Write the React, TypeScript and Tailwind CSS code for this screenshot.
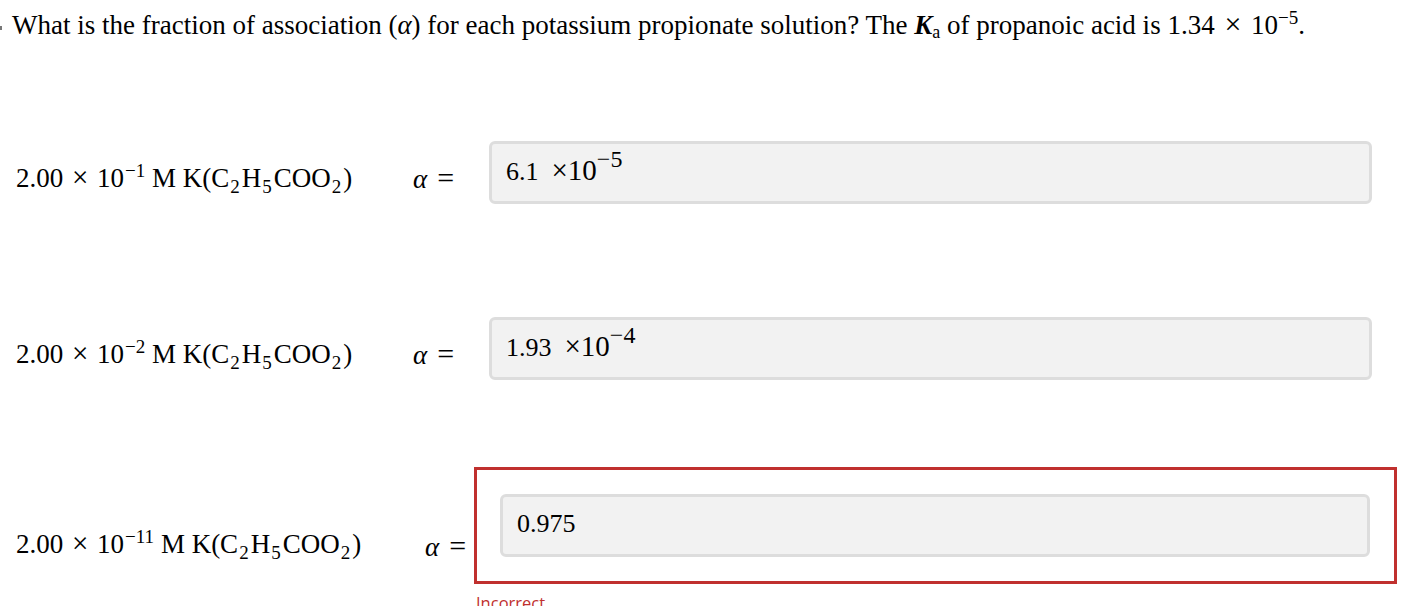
import React from "react";

const serif = { fontFamily: '"Liberation Serif", "Times New Roman", serif' };

function Sub({ c }: { c: string }) {
  return <sub className="text-[19px] relative top-[6px] mr-[2px] ml-[1px]">{c}</sub>;
}

function Label({ exp }: { exp: string }) {
  return (
    <span className="text-[27px] leading-[31px] text-black whitespace-nowrap" style={serif}>
      2.00 <span className="text-[29px] leading-none mx-[2px]">×</span> 10<sup className="text-[19px] relative -top-[10px] ml-[1px]">−{exp}</sup> M K(C<Sub c="2" />H<Sub c="5" />COO<Sub c="2" />)
    </span>
  );
}

function Alpha() {
  return (
    <span className="text-[27px] leading-[31px] text-black whitespace-nowrap" style={serif}>
      <i>α</i><span className="ml-[10px] text-[30px] leading-none">=</span>
    </span>
  );
}

function Box({ children }: { children?: React.ReactNode }) {
  return (
    <div className="h-[63px] w-full rounded-[6px] border-[3px] border-[#dddddd] bg-[#f2f2f2] pl-[14px] pt-[12px] text-[26px] leading-[30px] text-black" style={serif}>
      {children}
    </div>
  );
}

function Sci({ m, e }: { m: string; e: string }) {
  return (
    <span className="whitespace-nowrap">
      {m}&nbsp;&nbsp;<span className="text-[29px] leading-none">×10</span><sup className="text-[24px] relative -top-[13px]">−{e}</sup>
    </span>
  );
}

export default function App() {
  return (
    <div className="w-[1410px] h-[606px] bg-white overflow-hidden relative">
      <div className="flex items-center h-[50px]">
        <span className="w-[2px] h-[4px] bg-[#777] mt-[6px] mr-[10px]" />
        <span className="text-[27px] leading-[31px] text-black whitespace-nowrap" style={serif}>
          What is the fraction of association (<i>α</i>) for each potassium propionate solution? The <b><i>K</i></b><sub className="text-[18px] relative top-[4px]">a</sub> of propanoic acid is 1.34 <span className="text-[30px] leading-none mx-[3px]">×</span> 10<sup className="text-[19px] relative -top-[10px]">−5</sup>.
        </span>
      </div>

      <div className="flex items-start mt-[91px]">
        <div className="w-[413px] pl-[16px] pt-[22px]"><Label exp="1" /></div>
        <div className="w-[76px] pt-[22px]"><Alpha /></div>
        <div className="w-[883px]"><Box><Sci m="6.1" e="5" /></Box></div>
      </div>

      <div className="flex items-start mt-[113px]">
        <div className="w-[413px] pl-[16px] pt-[22px]"><Label exp="2" /></div>
        <div className="w-[76px] pt-[22px]"><Alpha /></div>
        <div className="w-[883px]"><Box><Sci m="1.93" e="4" /></Box></div>
      </div>

      <div className="flex items-start mt-[87px]">
        <div className="w-[425px] pl-[16px] pt-[62px]"><Label exp="11" /></div>
        <div className="w-[49px] pt-[64px]"><Alpha /></div>
        <div className="w-[923px]">
          <div className="border-[3px] border-[#c0302e] pt-[24px] pb-[24px] pl-[23px] pr-[24px]">
            <Box>0.975</Box>
          </div>
          <div className="pl-[2px] pt-[7px] text-[16.5px] text-[#c0302e]" style={{ fontFamily: '"Open Sans", sans-serif' }}>Incorrect</div>
        </div>
      </div>
    </div>
  );
}
